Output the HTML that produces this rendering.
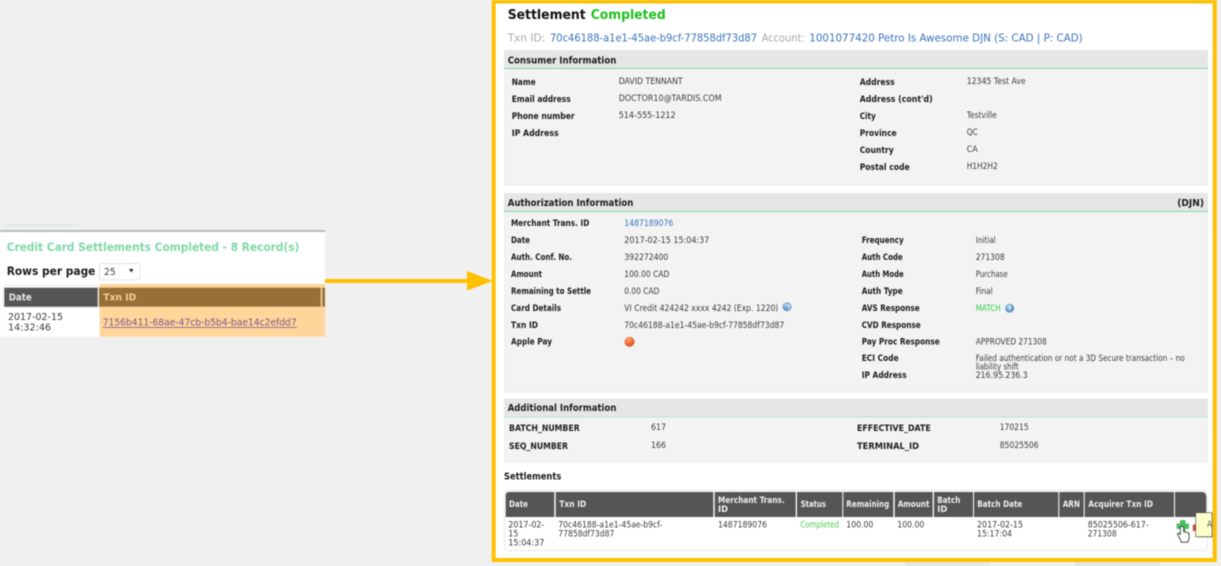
<!DOCTYPE html>
<html><head><meta charset="utf-8"><style>
html,body{margin:0;padding:0;background:#f0f0f0;width:1221px;height:566px;overflow:hidden}
svg{display:block;filter:blur(.45px)}
text{font-family:"DejaVu Sans",sans-serif;font-size:8.4px;fill:#3c3c3c;white-space:pre}
.b{font-weight:bold;fill:#1c1c1c;font-size:8.5px}
.h{font-weight:bold;font-size:9.3px;fill:#1c1c1c}
.l{fill:#3a72bc}
.s{font-size:11px}
.g{fill:#a6a6a6}
.t{font-weight:bold;fill:#f0f0f0;font-size:8.5px}
</style></head><body>
<svg width="1221" height="566" viewBox="0 0 1221 566" xmlns="http://www.w3.org/2000/svg">
<rect width="1221" height="566" fill="#f0f0f0"/>
<rect x="905" y="562" width="85" height="4" fill="#e6e6e6"/><rect x="1075" y="562" width="85" height="4" fill="#e6e6e6"/>

<!-- left panel -->
<rect x="7" y="225" width="72" height="1" fill="#cfe9dc"/>
<rect x="0" y="230" width="325" height="107" fill="#fff"/>
<rect x="0" y="230" width="325" height="2" fill="#bbb"/>
<text x="6.7" y="251" textLength="292.7" lengthAdjust="spacingAndGlyphs" style="font-weight:bold;font-size:11.3px;fill:#7fd8a8">Credit Card Settlements Completed - 8 Record(s)</text>
<text x="6.7" y="275" textLength="88.7" lengthAdjust="spacingAndGlyphs" style="font-weight:bold;font-size:11.3px;fill:#1c1c1c">Rows per page</text>
<rect x="99.5" y="263.5" width="40.5" height="16.5" rx="3" fill="#fff" stroke="#e2e2e2"/>
<text x="104" y="275" textLength="11.7" lengthAdjust="spacingAndGlyphs" style="font-size:9.5px">25</text>
<path d="M129 269h4.500l-2.250 3.500z" fill="#222"/>
<rect x="3" y="285.5" width="96" height="22" rx="3" fill="none" stroke="#e8e8e8"/>
<rect x="4.3" y="287.7" width="93.400" height="19" fill="#555"/>
<text x="8.7" y="300.3" textLength="23" lengthAdjust="spacingAndGlyphs" style="font-weight:bold;font-size:9.5px;fill:#e8e8e8">Date</text>
<text x="8" y="320" textLength="55" lengthAdjust="spacingAndGlyphs" style="font-size:9.5px">2017-02-15</text>
<text x="8" y="330.7" textLength="43" lengthAdjust="spacingAndGlyphs" style="font-size:9.5px">14:32:46</text>
<rect x="99.7" y="284" width="225.300" height="52.700" fill="#ffd599"/>
<rect x="99" y="287.7" width="221.700" height="19" fill="#977038"/>
<rect x="322.3" y="287.7" width="2.700" height="19" fill="#977038"/>
<text x="103.3" y="300.3" textLength="33" lengthAdjust="spacingAndGlyphs" style="font-weight:bold;font-size:9.5px;fill:#f5cf8f">Txn ID</text>
<text x="102.7" y="325.7" textLength="194" lengthAdjust="spacingAndGlyphs" style="font-size:9.5px;fill:#7a5a8a">7156b411-68ae-47cb-b5b4-bae14c2efdd7</text>
<rect x="102.7" y="327" width="194" height=".8" fill="#7a5a9a"/>

<!-- arrow -->
<rect x="325" y="279" width="143" height="4" fill="#ffc000"/>
<path d="M467 271L493 281L467 290.500z" fill="#ffc000"/>

<!-- highlight frame -->
<rect x="493.7" y="1.5" width="721" height="558.500" fill="#fff" stroke="#ffc000" stroke-width="4"/>

<!-- title -->
<text x="507.7" y="19" textLength="78" lengthAdjust="spacingAndGlyphs" style="font-weight:bold;font-size:13.5px;fill:#111">Settlement</text>
<text x="590.7" y="19" textLength="75" lengthAdjust="spacingAndGlyphs" style="font-weight:bold;font-size:13.5px;fill:#1fc01f">Completed</text>
<text x="507.7" y="41.7" textLength="37.500" lengthAdjust="spacingAndGlyphs" class="s g">Txn ID:</text>
<text x="550" y="41.7" textLength="207" lengthAdjust="spacingAndGlyphs" class="s l">70c46188-a1e1-45ae-b9cf-77858df73d87</text>
<text x="761.7" y="41.7" textLength="43" lengthAdjust="spacingAndGlyphs" class="s g">Account:</text>
<text x="809.3" y="41.7" textLength="273.400" lengthAdjust="spacingAndGlyphs" class="s l">1001077420 Petro Is Awesome DJN (S: CAD | P: CAD)</text>

<!-- consumer -->
<rect x="504.5" y="50.5" width="703" height="134.500" fill="#f3f3f3" stroke="#ececec"/>
<rect x="504" y="50" width="704" height="18" fill="#e6e6e6"/>
<rect x="504" y="68" width="704" height="1" fill="#80d8a8"/>
<text x="507.7" y="63.3" textLength="108.700" lengthAdjust="spacingAndGlyphs" class="h">Consumer Information</text>
<text x="511.7" y="85" textLength="24" lengthAdjust="spacingAndGlyphs" class="b">Name</text>
<text x="511.7" y="102" textLength="59" lengthAdjust="spacingAndGlyphs" class="b">Email address</text>
<text x="511.7" y="119" textLength="63" lengthAdjust="spacingAndGlyphs" class="b">Phone number</text>
<text x="511.7" y="136" textLength="47" lengthAdjust="spacingAndGlyphs" class="b">IP Address</text>
<text x="618.7" y="84" textLength="64" lengthAdjust="spacingAndGlyphs">DAVID TENNANT</text>
<text x="618.7" y="101" textLength="103" lengthAdjust="spacingAndGlyphs">DOCTOR10@TARDIS.COM</text>
<text x="618.7" y="118" textLength="57" lengthAdjust="spacingAndGlyphs">514-555-1212</text>
<text x="859.7" y="85" textLength="35" lengthAdjust="spacingAndGlyphs" class="b">Address</text>
<text x="859.7" y="102" textLength="73" lengthAdjust="spacingAndGlyphs" class="b">Address (cont'd)</text>
<text x="859.7" y="119" textLength="16" lengthAdjust="spacingAndGlyphs" class="b">City</text>
<text x="859.7" y="136" textLength="37" lengthAdjust="spacingAndGlyphs" class="b">Province</text>
<text x="859.7" y="153" textLength="34" lengthAdjust="spacingAndGlyphs" class="b">Country</text>
<text x="859.7" y="170" textLength="50" lengthAdjust="spacingAndGlyphs" class="b">Postal code</text>
<text x="966.7" y="84" textLength="59" lengthAdjust="spacingAndGlyphs">12345 Test Ave</text>
<text x="966.7" y="118" textLength="30" lengthAdjust="spacingAndGlyphs">Testville</text>
<text x="966.7" y="135" textLength="11" lengthAdjust="spacingAndGlyphs">QC</text>
<text x="966.7" y="152" textLength="11" lengthAdjust="spacingAndGlyphs">CA</text>
<text x="966.7" y="169" textLength="31" lengthAdjust="spacingAndGlyphs">H1H2H2</text>

<!-- authorization -->
<rect x="504.5" y="193.5" width="703" height="198.500" fill="#f3f3f3" stroke="#ececec"/>
<rect x="504" y="193.3" width="704" height="18" fill="#e6e6e6"/>
<rect x="504" y="211" width="704" height="1" fill="#80d8a8"/>
<text x="507.7" y="206" textLength="125.700" lengthAdjust="spacingAndGlyphs" class="h">Authorization Information</text>
<text x="1177.3" y="206" textLength="26.700" lengthAdjust="spacingAndGlyphs" class="h">(DJN)</text>
<text x="511" y="226" textLength="78.300" lengthAdjust="spacingAndGlyphs" class="b">Merchant Trans. ID</text>
<text x="511" y="243" textLength="19" lengthAdjust="spacingAndGlyphs" class="b">Date</text>
<text x="511" y="260" textLength="61" lengthAdjust="spacingAndGlyphs" class="b">Auth. Conf. No.</text>
<text x="511" y="277" textLength="31" lengthAdjust="spacingAndGlyphs" class="b">Amount</text>
<text x="511" y="294" textLength="80" lengthAdjust="spacingAndGlyphs" class="b">Remaining to Settle</text>
<text x="511" y="311" textLength="50" lengthAdjust="spacingAndGlyphs" class="b">Card Details</text>
<text x="511" y="328" textLength="27" lengthAdjust="spacingAndGlyphs" class="b">Txn ID</text>
<text x="511" y="344.5" textLength="41" lengthAdjust="spacingAndGlyphs" class="b">Apple Pay</text>
<text x="624.3" y="226" textLength="49" lengthAdjust="spacingAndGlyphs" class="l">1487189076</text>
<text x="624.3" y="243" textLength="85" lengthAdjust="spacingAndGlyphs">2017-02-15 15:04:37</text>
<text x="624.3" y="260" textLength="44" lengthAdjust="spacingAndGlyphs">392272400</text>
<text x="624.3" y="277" textLength="45" lengthAdjust="spacingAndGlyphs">100.00 CAD</text>
<text x="624.3" y="294" textLength="35" lengthAdjust="spacingAndGlyphs">0.00 CAD</text>
<text x="624.3" y="311" textLength="154" lengthAdjust="spacingAndGlyphs">VI Credit 424242 xxxx 4242 (Exp. 1220)</text>
<text x="624.3" y="328" textLength="160" lengthAdjust="spacingAndGlyphs">70c46188-a1e1-45ae-b9cf-77858df73d87</text>
<defs>
<radialGradient id="bl" cx=".4" cy=".3" r=".8"><stop offset="0" stop-color="#b4d6f0"/><stop offset=".6" stop-color="#5c94c8"/><stop offset="1" stop-color="#8aa4c0"/></radialGradient>
<radialGradient id="or" cx=".4" cy=".3" r=".8"><stop offset="0" stop-color="#ffb080"/><stop offset=".6" stop-color="#f0602a"/><stop offset="1" stop-color="#d84a18"/></radialGradient>
</defs>
<circle cx="787" cy="306.7" r="4.500" fill="url(#bl)"/>
<text x="789" y="309" style="font-size:6px;font-weight:bold;fill:#fff" text-anchor="middle">?</text>
<circle cx="1009.7" cy="308.3" r="4.500" fill="url(#bl)"/>
<text x="1009.7" y="310.5" style="font-size:6px;font-weight:bold;fill:#fff" text-anchor="middle">?</text>
<circle cx="629.5" cy="341.7" r="5" fill="url(#or)"/>
<text x="861.7" y="243" textLength="42" lengthAdjust="spacingAndGlyphs" class="b">Frequency</text>
<text x="861.7" y="260" textLength="41" lengthAdjust="spacingAndGlyphs" class="b">Auth Code</text>
<text x="861.7" y="277" textLength="42" lengthAdjust="spacingAndGlyphs" class="b">Auth Mode</text>
<text x="861.7" y="294" textLength="41" lengthAdjust="spacingAndGlyphs" class="b">Auth Type</text>
<text x="861.7" y="311" textLength="58" lengthAdjust="spacingAndGlyphs" class="b">AVS Response</text>
<text x="861.7" y="328" textLength="59" lengthAdjust="spacingAndGlyphs" class="b">CVD Response</text>
<text x="861.7" y="344.5" textLength="78" lengthAdjust="spacingAndGlyphs" class="b">Pay Proc Response</text>
<text x="861.7" y="361" textLength="37" lengthAdjust="spacingAndGlyphs" class="b">ECI Code</text>
<text x="861.7" y="378" textLength="45" lengthAdjust="spacingAndGlyphs" class="b">IP Address</text>
<text x="975.7" y="243" textLength="20" lengthAdjust="spacingAndGlyphs">Initial</text>
<text x="975.7" y="260" textLength="29" lengthAdjust="spacingAndGlyphs">271308</text>
<text x="975.7" y="277" textLength="32" lengthAdjust="spacingAndGlyphs">Purchase</text>
<text x="975.7" y="294" textLength="17" lengthAdjust="spacingAndGlyphs">Final</text>
<text x="975.7" y="311" textLength="25" lengthAdjust="spacingAndGlyphs" style="fill:#30d050">MATCH</text>
<text x="975.7" y="344.5" textLength="71" lengthAdjust="spacingAndGlyphs">APPROVED 271308</text>
<text x="975.7" y="361" textLength="209" lengthAdjust="spacingAndGlyphs">Failed authentication or not a 3D Secure transaction – no</text>
<text x="975.7" y="369.5" textLength="43" lengthAdjust="spacingAndGlyphs">liability shift</text>
<text x="975.7" y="378" textLength="52" lengthAdjust="spacingAndGlyphs">216.95.236.3</text>

<!-- additional -->
<rect x="504.5" y="399.5" width="703" height="63" fill="#f3f3f3" stroke="#ececec"/>
<rect x="504" y="398.5" width="704" height="18" fill="#e6e6e6"/>
<rect x="504" y="416.5" width="704" height="1" fill="#b8e6cc"/>
<text x="507.7" y="411" textLength="108.700" lengthAdjust="spacingAndGlyphs" class="h">Additional Information</text>
<text x="509" y="431" textLength="70.700" lengthAdjust="spacingAndGlyphs" class="b">BATCH_NUMBER</text>
<text x="509" y="449" textLength="59" lengthAdjust="spacingAndGlyphs" class="b">SEQ_NUMBER</text>
<text x="651" y="430" textLength="15" lengthAdjust="spacingAndGlyphs">617</text>
<text x="651" y="448" textLength="15" lengthAdjust="spacingAndGlyphs">166</text>
<text x="857" y="431" textLength="73.700" lengthAdjust="spacingAndGlyphs" class="b">EFFECTIVE_DATE</text>
<text x="857" y="449" textLength="62" lengthAdjust="spacingAndGlyphs" class="b">TERMINAL_ID</text>
<text x="999.7" y="430" textLength="29" lengthAdjust="spacingAndGlyphs">170215</text>
<text x="999.7" y="448" textLength="39" lengthAdjust="spacingAndGlyphs">85025506</text>

<!-- settlements -->
<text x="504" y="479.7" textLength="57.300" lengthAdjust="spacingAndGlyphs" class="h">Settlements</text>
<rect x="504.5" y="490.5" width="703" height="60" rx="4" fill="#fff" stroke="#e8e8e8"/>
<g fill="#555">
<path d="M505.7 517v-22a3 3 0 0 1 3-3h45.600v25z"/>
<rect x="555.7" y="492" width="157.600" height="25"/>
<rect x="714.7" y="492" width="81" height="25"/>
<rect x="797" y="492" width="45.300" height="25"/>
<rect x="843.3" y="492" width="50" height="25"/>
<rect x="894.7" y="492" width="38" height="25"/>
<rect x="934" y="492" width="39" height="25"/>
<rect x="974" y="492" width="84.300" height="25"/>
<rect x="1059.3" y="492" width="24.400" height="25"/>
<rect x="1084.7" y="492" width="89.300" height="25"/>
<path d="M1175 492h27.300a4 4 0 0 1 4 4v21h-31.300z"/>
</g>
<text x="509" y="507" textLength="19" lengthAdjust="spacingAndGlyphs" class="t">Date</text>
<text x="559.3" y="507" textLength="27" lengthAdjust="spacingAndGlyphs" class="t">Txn ID</text>
<text x="718" y="503" textLength="66.700" lengthAdjust="spacingAndGlyphs" class="t">Merchant Trans.</text>
<text x="718" y="512" textLength="10" lengthAdjust="spacingAndGlyphs" class="t">ID</text>
<text x="800.7" y="507" textLength="25.300" lengthAdjust="spacingAndGlyphs" class="t">Status</text>
<text x="846.3" y="507" textLength="43" lengthAdjust="spacingAndGlyphs" class="t">Remaining</text>
<text x="897.7" y="507" textLength="31.700" lengthAdjust="spacingAndGlyphs" class="t">Amount</text>
<text x="937.3" y="503" textLength="23" lengthAdjust="spacingAndGlyphs" class="t">Batch</text>
<text x="937.3" y="512" textLength="10" lengthAdjust="spacingAndGlyphs" class="t">ID</text>
<text x="977.3" y="507" textLength="45" lengthAdjust="spacingAndGlyphs" class="t">Batch Date</text>
<text x="1062.7" y="507" textLength="17.300" lengthAdjust="spacingAndGlyphs" class="t">ARN</text>
<text x="1088.3" y="507" textLength="64.700" lengthAdjust="spacingAndGlyphs" class="t">Acquirer Txn ID</text>
<text x="508.3" y="527.7" textLength="36" lengthAdjust="spacingAndGlyphs">2017-02-</text>
<text x="508.3" y="536.7" textLength="10" lengthAdjust="spacingAndGlyphs">15</text>
<text x="508.3" y="545.7" textLength="36" lengthAdjust="spacingAndGlyphs">15:04:37</text>
<text x="558.3" y="527.7" textLength="104" lengthAdjust="spacingAndGlyphs">70c46188-a1e1-45ae-b9cf-</text>
<text x="558.3" y="536.7" textLength="56" lengthAdjust="spacingAndGlyphs">77858df73d87</text>
<text x="718" y="527.7" textLength="49" lengthAdjust="spacingAndGlyphs">1487189076</text>
<text x="800.3" y="527.7" textLength="38.700" lengthAdjust="spacingAndGlyphs" style="fill:#50c850">Completed</text>
<text x="846.3" y="527.7" textLength="27" lengthAdjust="spacingAndGlyphs">100.00</text>
<text x="897.3" y="527.7" textLength="27" lengthAdjust="spacingAndGlyphs">100.00</text>
<text x="977" y="527.7" textLength="46" lengthAdjust="spacingAndGlyphs">2017-02-15</text>
<text x="977" y="536.7" textLength="35" lengthAdjust="spacingAndGlyphs">15:17:04</text>
<text x="1087.7" y="527.7" textLength="61" lengthAdjust="spacingAndGlyphs">85025506-617-</text>
<text x="1087.7" y="536.7" textLength="29" lengthAdjust="spacingAndGlyphs">271308</text>

<!-- action icons, tooltip, cursor -->
<path d="M1180.5 520.500h4.500v3.500h3.500v4.500h-3.500v3.500h-4.500v-3.500h-3.500v-4.500h3.500z" fill="#45c45c" stroke="#2c9a3e" stroke-width=".6"/>
<path d="M1192.8 526a1.600 1.600 0 0 1 3.200 0v5h-3.200z" fill="#c84a34"/>
<rect x="1197" y="513.500" width="16" height="24" fill="#bbb"/>
<rect x="1195.7" y="512.7" width="16.300" height="24" fill="#ffffcc" stroke="#444" stroke-width=".6"/>
<text x="1207" y="527" textLength="5" lengthAdjust="spacingAndGlyphs" style="fill:#555;font-size:9px">A</text>
<path d="M1180.3 527.500v7l-1.700-1.700-1.200 1.200 2.600 5 1.200 3.200h6.500l1.300-3v-6l-1.700-.7-1.700-.4-2-.4v-4.200c0-1.600-3.300-1.600-3.300 0z" fill="#fff" stroke="#333" stroke-width=".85" stroke-linejoin="round"/>
<rect x="1212.7" y="500" width="4" height="40" fill="#ffc000"/>
</svg>
</body></html>
